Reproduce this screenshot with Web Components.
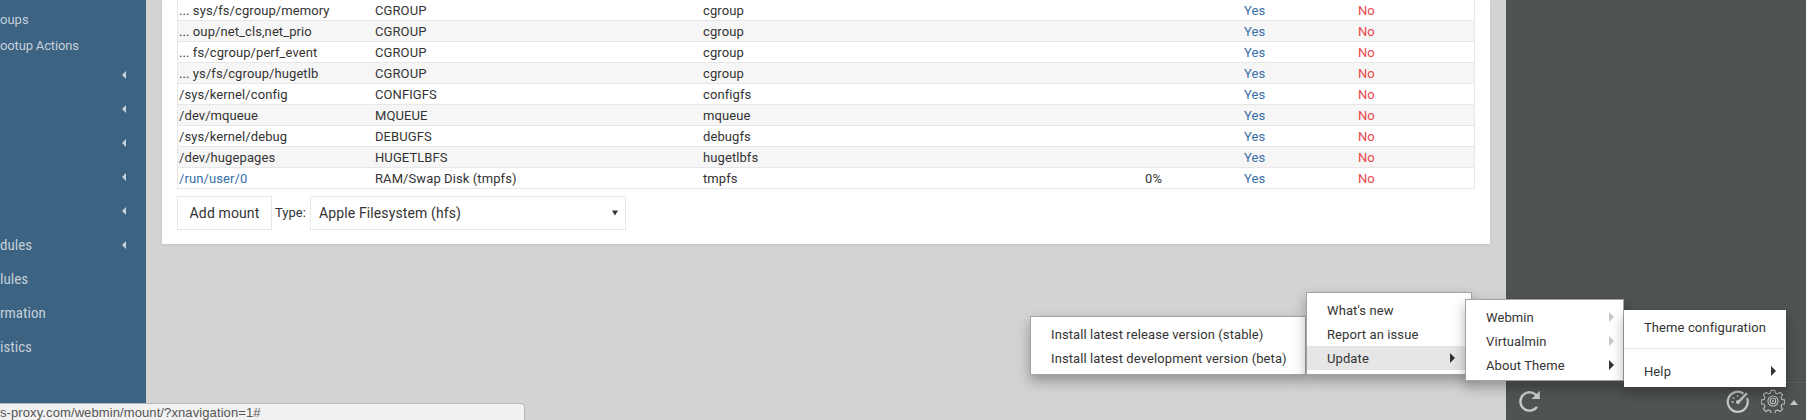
<!DOCTYPE html>
<html><head><meta charset="utf-8"><title>Webmin</title>
<style>
html,body{margin:0;height:420px;overflow:hidden}
body{font-family:Roboto,"Liberation Sans",sans-serif;color:#333}
</style></head><body>
<app-shell>
  <side-bar slot="side">
    <side-item h="26">oups</side-item>
    <side-item h="26" style="letter-spacing:-.15px">ootup Actions</side-item>
    <side-item h="34" arrow top></side-item>
    <side-item h="34" arrow></side-item>
    <side-item h="34" arrow></side-item>
    <side-item h="34" arrow></side-item>
    <side-item h="34" arrow></side-item>
    <side-item h="34" arrow narrow>dules</side-item>
    <side-item h="34" narrow>lules</side-item>
    <side-item h="34" narrow>rmation</side-item>
    <side-item h="34" narrow>istics</side-item>
  </side-bar>
  <main-card slot="main"></main-card>
  <right-panel slot="right"></right-panel>
  <status-bar slot="over">s-proxy.com/webmin/mount/?xnavigation=1#</status-bar>
  <ctx-menu slot="over" style="left:1030px;top:316px;width:276px;z-index:1">
    <menu-item>Install latest release version (stable)</menu-item>
    <menu-item>Install latest development version (beta)</menu-item>
  </ctx-menu>
  <ctx-menu slot="over" style="left:1306px;top:292px;width:166px;z-index:2">
    <menu-item>What's new</menu-item>
    <menu-item>Report an issue</menu-item>
    <menu-item arrow="dark" hover style="padding-right:16px">Update</menu-item>
  </ctx-menu>
  <ctx-menu slot="over" style="left:1465px;top:299px;width:159px;z-index:3;padding-bottom:3px">
    <menu-item arrow="light" style="padding-right:9px">Webmin</menu-item>
    <menu-item arrow="light" style="padding-right:9px">Virtualmin</menu-item>
    <menu-item arrow="dark" style="padding-right:9px">About Theme</menu-item>
  </ctx-menu>
  <ctx-menu slot="over" nb style="left:1624px;top:310px;width:162px;z-index:4;padding-top:4px;padding-bottom:3px">
    <menu-item style="padding-left:19px">Theme configuration</menu-item>
    <menu-sep></menu-sep>
    <menu-item arrow="dark" style="padding-left:19px;padding-right:9px">Help</menu-item>
  </ctx-menu>
</app-shell>
<script>
const def=(n,html,extra={})=>{customElements.define(n,class extends HTMLElement{
  constructor(){super();this.attachShadow({mode:'open'}).innerHTML=html;}
  connectedCallback(){extra.init&&extra.init(this);}
});};
def('app-shell',`<style>
:host{display:flex;width:1806px;height:420px;position:relative;overflow:hidden;background:#d3d3d3}
::slotted([slot=side]){flex:0 0 146px}
::slotted([slot=main]){flex:1 1 auto}
::slotted([slot=right]){flex:0 0 300px}
</style><slot name="side"></slot><slot name="main"></slot><slot name="right"></slot><slot name="over"></slot>`);
def('side-bar',`<style>:host{display:flex;flex-direction:column;background:#3c6382;height:420px;overflow:hidden;font-size:13px;color:#c4d0da}
</style><div style="height:6px"></div><slot></slot>`);
def('side-item',`<style>:host{display:flex;align-items:center;justify-content:space-between;white-space:nowrap;padding-right:20px;box-sizing:border-box}
:host([narrow]) span.t{font-family:"Liberation Sans Narrow","Roboto Condensed",Roboto,sans-serif;font-size:15px}
i{display:none;width:0;height:0;border:4px solid transparent;border-left-width:0;border-right:4px solid #c4d0da}
:host([arrow]) i{display:block}
</style><span class="t"><slot></slot></span><i></i>`,{init(e){e.style.height=e.getAttribute('h')+'px'}});
const rows=[
["... sys/fs/cgroup/memory","CGROUP","cgroup",""],
["... oup/net_cls,net_prio","CGROUP","cgroup",""],
["... fs/cgroup/perf_event","CGROUP","cgroup",""],
["... ys/fs/cgroup/hugetlb","CGROUP","cgroup",""],
["/sys/kernel/config","CONFIGFS","configfs",""],
["/dev/mqueue","MQUEUE","mqueue",""],
["/sys/kernel/debug","DEBUGFS","debugfs",""],
["/dev/hugepages","HUGETLBFS","hugetlbfs",""],
["/run/user/0","RAM/Swap Disk (tmpfs)","tmpfs","0%"]];
def('main-card',`<style>:host{display:block;min-width:0}
.card{margin:0 16px;background:#fff;height:244px;box-sizing:border-box;padding:0 15px;box-shadow:0 1px 2px rgba(0,0,0,.08)}
.tb{display:flex;flex-direction:column;border:solid #e7e7e7;border-width:0 1px 0 1px;font-size:13px;letter-spacing:.09px}
.bar{display:flex;align-items:stretch;margin-top:7px;height:34px}
</style><div class="card"><div class="tb" id="t"></div><div class="bar">
<flat-button>Add mount</flat-button><type-label>Type:</type-label><flat-select>Apple Filesystem (hfs)</flat-select></div></div>`,{init(e){
  const t=e.shadowRoot.getElementById('t');
  rows.forEach((r,i)=>{const m=document.createElement('mount-row');
    if(i%2)m.setAttribute('odd','');if(r[3])m.setAttribute('link','');
    m.innerHTML=`<span>${r[0]}</span><span>${r[1]}</span><span>${r[2]}</span><span>${r[3]}</span><span class="y">Yes</span><span class="n">No</span>`;
    t.appendChild(m);});
}});
def('mount-row',`<style>:host{display:grid;grid-template-columns:196px 328px 442px 99px 114px 1fr;height:21px;box-sizing:border-box;border-bottom:1px solid #e7e7e7;align-items:center;line-height:20px;padding-top:1px;white-space:nowrap}
:host([odd]){background:#f6f6f6}
::slotted(span){padding-left:1px}
::slotted(.y){color:#3a6ea8}
::slotted(.n){color:#e9484a}
:host([link]) ::slotted(span:first-child){color:#2f6ea8}
</style><slot></slot>`);
def('flat-button',`<style>:host{display:flex;align-items:center;justify-content:center;width:95px;box-sizing:border-box;border:1px solid #e7e7e7;font-size:14px;letter-spacing:.12px;background:#fff}
</style><slot></slot>`);
def('type-label',`<style>:host{display:flex;align-items:center;font-size:13px;padding:0 3px;width:38px;box-sizing:border-box;padding-bottom:2px}</style><slot></slot>`);
def('flat-select',`<style>:host{display:flex;align-items:center;justify-content:space-between;width:316px;box-sizing:border-box;border:1px solid #e7e7e7;font-size:14px;letter-spacing:.12px;padding:0 7px 0 8px;background:#fff}
svg{display:block}
</style><span><slot></slot></span><svg width="6" height="6" viewBox="0 0 6 6"><path d="M0 .5h6L3 5.5z" fill="#333"/></svg>`);
def('right-panel',`<style>:host{display:flex;flex-direction:column;justify-content:flex-end;background:#4f5352;height:420px}
.f{height:38px;box-sizing:border-box;border-top:1px solid #5d6160;display:flex;align-items:center;justify-content:space-between;padding:0 8px 2px 12px;color:#c6c9c9}
.r{display:flex;align-items:center;gap:11px}
svg{display:block}
</style><div class="f">
<svg width="24" height="24" viewBox="0 0 22 22" fill="none" stroke="currentColor" stroke-width="2.2"><path d="M17.200 6.200A8.400 8.400 0 1 0 17.400 16.400"/><path d="M20 1.500v7.600h-7.600z" fill="currentColor" stroke="none"/></svg>
<div class="r">
<svg width="24" height="24" viewBox="0 0 24 24" fill="none" stroke="currentColor"><path d="M17.500 4.600A10 10 0 1 0 21 9" stroke-width="2.200"/><path d="M21 4.200L12.800 12.600" stroke-width="2.400"/><circle cx="12" cy="13" r="2" fill="currentColor" stroke="none"/><path d="M5.600 13h2M7 8.600l1.300 1.200M11.500 6v1.800" stroke-width="1.300"/></svg>
<svg width="24" height="24" viewBox="0 0 26 26" fill="none" stroke="currentColor" stroke-width="1.100"><path d="M11 1.800h4l.6 3 2.400 1 2.600-1.700 2.800 2.800-1.700 2.600 1 2.400 3 .6v4l-3 .6-1 2.400 1.700 2.600-2.800 2.800-2.600-1.700-2.400 1-.6 3h-4l-.6-3-2.400-1-2.600 1.700-2.800-2.800 1.700-2.600-1-2.400-3-.6v-4l3-.6 1-2.400L2.600 6.900l2.800-2.800 2.600 1.700 2.400-1z" transform="translate(0 -.5)"/><circle cx="13" cy="13" r="5.500"/><circle cx="13" cy="13" r="3"/><circle cx="13" cy="13" r="1" fill="currentColor" stroke="none"/></svg>
<svg width="8" height="5" viewBox="0 0 8 5" style="margin-left:-6px;margin-top:3px"><path d="M0 5L4 0l4 5z" fill="currentColor"/></svg>
</div></div>`);
def('status-bar',`<style>:host{position:absolute;left:0;top:403px;width:525px;height:17px;box-sizing:border-box;background:#f1f1f1;border:solid #b8b8b8;border-width:1px 1px 0 0;border-top-right-radius:4px;font:13px/17px "Liberation Sans",Arial,sans-serif;letter-spacing:.1px;color:#555;white-space:nowrap;overflow:hidden}
</style><slot></slot>`);
def('ctx-menu',`<style>:host{position:absolute;display:block;box-sizing:border-box;background:#fff;padding:5px 0 4px;border:1px solid #a3a3a3;box-shadow:0 6px 12px rgba(0,0,0,.3);font-size:13px;letter-spacing:.1px;color:#333}
:host([nb]){border-color:transparent}
</style><slot></slot>`);
def('menu-item',`<style>:host{display:flex;align-items:center;justify-content:space-between;white-space:nowrap;padding:0 8px 0 20px;height:24px;box-sizing:border-box}
:host([hover]){background:#e6e6e6}
i{display:none;width:0;height:0;border:5px solid transparent;border-right-width:0;border-left-color:#333}
:host([arrow]) i{display:block}
:host([arrow=light]) i{border-left-color:#c8c8c8}
</style><span><slot></slot></span><i></i>`);
def('menu-sep',`<style>:host{display:block;height:1px;background:#e5e5e5;margin:9px 0 10px}</style>`);
</script>
</body></html>
